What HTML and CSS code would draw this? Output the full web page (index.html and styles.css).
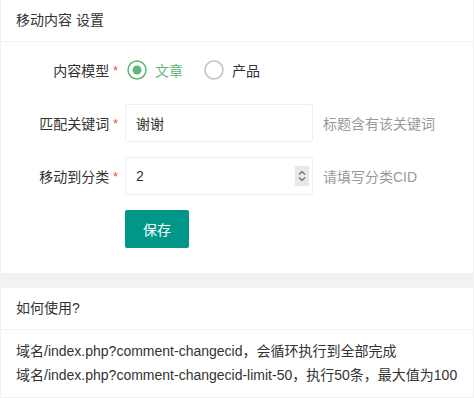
FILE: index.html
```html
<!DOCTYPE html>
<html lang="zh-CN">
<head>
    <meta charset="UTF-8">
    <meta name="viewport" content="width=device-width, initial-scale=1.0">
    <title>移动内容 设置</title>
    <link rel="stylesheet" href="styles.css">
</head>
<body>
    <div class="card">
        <div class="card-header">移动内容 设置</div>
        <div class="card-body">
            <form class="form">
                <div class="form-item">
                    <label class="form-label">内容模型<span class="req">*</span></label>
                    <div class="radio-group">
                        <span class="radio checked">
                            <svg width="20" height="20" viewBox="0 0 20 20"><circle cx="10" cy="10" r="9" fill="none" stroke="#5FB878" stroke-width="1.5"/><circle cx="10" cy="10" r="4.5" fill="#5FB878"/></svg>
                            <span>文章</span>
                        </span>
                        <span class="radio">
                            <svg width="20" height="20" viewBox="0 0 20 20"><circle cx="10" cy="10" r="9" fill="none" stroke="#c2c2c2" stroke-width="1.5"/></svg>
                            <span>产品</span>
                        </span>
                    </div>
                </div>
                <div class="form-item">
                    <label class="form-label">匹配关键词<span class="req">*</span></label>
                    <div class="input-wrap">
                        <input class="input" type="text" value="谢谢">
                    </div>
                    <div class="form-aux">标题含有该关键词</div>
                </div>
                <div class="form-item">
                    <label class="form-label">移动到分类<span class="req">*</span></label>
                    <div class="input-wrap">
                        <input class="input" type="text" value="2">
                        <span class="spinner">
                            <svg width="10" height="14" viewBox="0 0 10 14"><path d="M2 5.5 L5 2.5 L8 5.5 M2 8.5 L5 11.5 L8 8.5" fill="none" stroke="#666" stroke-width="1.1"/></svg>
                        </span>
                    </div>
                    <div class="form-aux">请填写分类CID</div>
                </div>
                <div class="form-item">
                    <div class="form-label"></div>
                    <button type="button" class="btn">保存</button>
                </div>
            </form>
        </div>
    </div>

    <div class="card">
        <div class="card-header">如何使用?</div>
        <div class="card-body usage">
            <p>域名/index.php?comment-changecid，会循环执行到全部完成</p>
            <p>域名/index.php?comment-changecid-limit-50，执行50条，最大值为100</p>
        </div>
    </div>
</body>
</html>
```

FILE: styles.css
```css
body {
    margin: 0;
    padding: 0 1px;
    background-color: #f2f2f2;
    font-family: "Liberation Sans", "Noto Sans CJK SC", sans-serif;
    font-size: 14px;
    color: #333;
}
.card {
    background: #fff;
    margin-bottom: 15px;
}
.card-header {
    height: 41px;
    line-height: 41px;
    padding: 0 15px;
    border-bottom: 1px solid #f3f3f3;
    color: #333;
}
.card-body {
    padding: 9px 15px 10px;
}
.form-item {
    display: flex;
    align-items: center;
    height: 38px;
    margin-bottom: 15px;
}
.form-label {
    width: 102px;
    flex: none;
    text-align: right;
    padding-right: 7px;
    color: #333;
}
.req {
    color: #ff3b30;
    margin-left: 4px;
    font-size: 12px;
    vertical-align: 1px;
}
.radio-group {
    display: flex;
    align-items: center;
}
.radio {
    display: flex;
    align-items: center;
    margin-right: 19px;
    color: #333;
}
.radio svg {
    margin-right: 8px;
    margin-left: 2px;
}
.radio.checked {
    color: #5FB878;
}
.input-wrap {
    position: relative;
    width: 188px;
    margin-right: 10px;
}
.input {
    box-sizing: border-box;
    width: 100%;
    height: 38px;
    padding: 0 10px;
    border: 1px solid #eee;
    border-radius: 2px;
    font-family: "Liberation Sans", "Noto Sans CJK SC", sans-serif;
    font-size: 14px;
    color: #333;
    outline: none;
}
.spinner {
    position: absolute;
    right: 4px;
    top: 9px;
    width: 14px;
    height: 20px;
    background: #e8e8ec;
    display: flex;
    align-items: center;
    justify-content: center;
}
.form-aux {
    color: #999;
}
.btn {
    height: 38px;
    padding: 0 18px;
    background-color: #009688;
    color: #fff;
    border: none;
    border-radius: 2px;
    font-family: "Liberation Sans", "Noto Sans CJK SC", sans-serif;
    font-size: 14px;
}
.usage p {
    margin: 0;
    line-height: 24px;
    color: #333;
}
```
